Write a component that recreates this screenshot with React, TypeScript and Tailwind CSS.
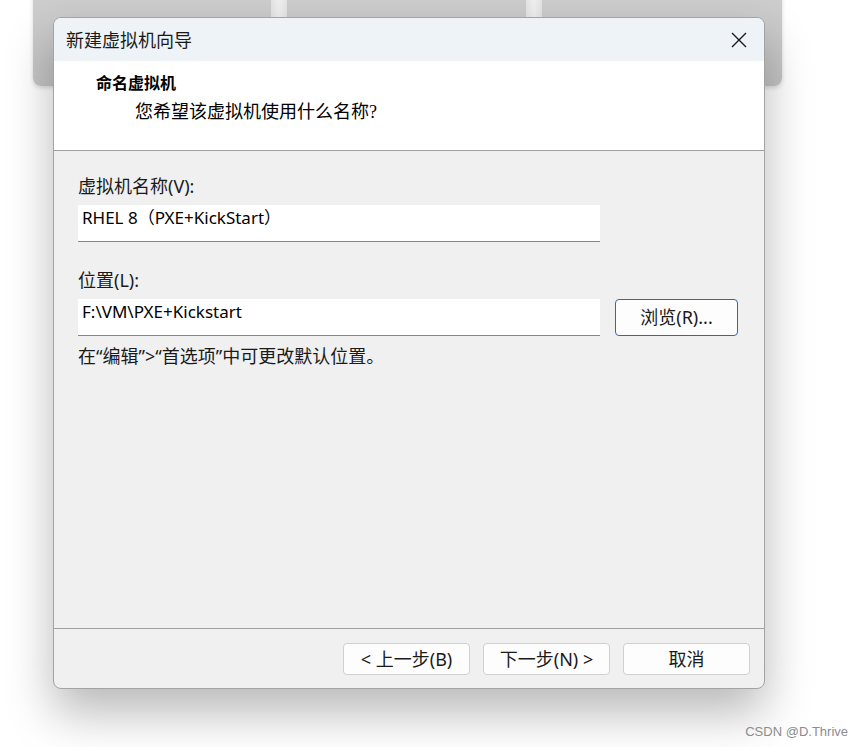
import React from "react";

const cjk = { fontFamily: '"Noto Sans", "Noto Sans CJK SC", sans-serif' };
const serif = { fontFamily: '"Liberation Serif", "Noto Sans CJK SC", serif' };

export default function App() {
  return (
    <div className="relative w-[863px] h-[747px] overflow-hidden bg-white" style={cjk}>
      {/* background window */}
      <div className="absolute left-[33px] top-[-20px] w-[749px] h-[106px] rounded-b-[8px] bg-gradient-to-b from-[#cfcfcf] to-[#c4c4c4] shadow-[0_2px_4px_rgba(0,0,0,0.15)]">
        <div className="absolute left-[238px] top-0 w-[16px] h-full bg-gradient-to-r from-[#e4e4e4] via-[#f0f0f0] to-[#e4e4e4]" />
        <div className="absolute left-[493px] top-0 w-[16px] h-full bg-gradient-to-r from-[#e4e4e4] via-[#f0f0f0] to-[#e4e4e4]" />
      </div>

      {/* dialog */}
      <div className="absolute left-[53px] top-[17px] w-[712px] h-[672px] rounded-[8px] border border-[#a3a3a3] bg-[#f0f0f0] overflow-hidden flex flex-col shadow-[0_24px_48px_rgba(0,0,0,0.28)]">
        {/* title bar */}
        <div className="h-[43px] bg-[#eef3f8] flex items-center justify-between pl-[12px] pr-[16px] shrink-0">
          <span className="text-[18px] text-[#1a1a1a] leading-none">新建虚拟机向导</span>
          <svg width="16" height="16" viewBox="0 0 16 16" className="mr-[1px]">
            <path d="M1 1 L15 15 M15 1 L1 15" stroke="#1a1a1a" strokeWidth="1.4" fill="none" />
          </svg>
        </div>
        {/* header */}
        <div className="h-[90px] bg-white border-b border-[#a0a0a0] shrink-0 flex flex-col pt-[12px]">
          <div className="pl-[42px] text-[16px] font-bold text-black leading-[22px]" style={serif}>命名虚拟机</div>
          <div className="pl-[81px] mt-[6px] text-[18px] text-black leading-[22px]" style={serif}>
            您希望该虚拟机使用什么名称?
          </div>
        </div>
        {/* body */}
        <div className="flex-1 flex flex-col pl-[24px] pt-[22px] text-[#1a1a1a]">
          <div className="text-[18px] leading-[26px]">虚拟机名称(V):</div>
          <div className="mt-[6px] w-[522px] h-[37px] bg-white border-b border-[#868686] pl-[4px] pt-[1px] text-[17px] leading-[24px] text-black">
            RHEL 8（PXE+KickStart）
          </div>
          <div className="mt-[25px] text-[18px] leading-[26px]">位置(L):</div>
          <div className="mt-[6px] flex items-start gap-[15px]">
            <div className="w-[522px] h-[37px] bg-white border-b border-[#868686] pl-[4px] pt-[1px] text-[17px] leading-[24px] text-black">
              F:\VM\PXE+Kickstart
            </div>
            <button className="w-[123px] h-[37px] rounded-[4px] border border-[#1f6fb8] bg-[#fdfdfd] text-[18px] text-[#1a1a1a] flex items-center justify-center">
              浏览(R)...
            </button>
          </div>
          <div className="mt-[7px] text-[18px] leading-[26px]">在“编辑”&gt;“首选项”中可更改默认位置。</div>
        </div>
        {/* footer */}
        <div className="h-[60px] border-t border-[#a0a0a0] shrink-0 flex justify-end items-start pt-[14px] pr-[14px] gap-[13px]">
          {["< 上一步(B)", "下一步(N) >", "取消"].map((t) => (
            <button
              key={t}
              className="w-[127px] h-[32px] rounded-[4px] border border-[#d0d0d0] bg-[#fdfdfd] text-[18px] text-[#1a1a1a] flex items-center justify-center"
            >
              {t}
            </button>
          ))}
        </div>
      </div>

      {/* watermark */}
      <div
        className="absolute right-[15px] top-[723px] text-[13px] text-[#8c8c8c] leading-[18px]"
        style={{ fontFamily: '"Liberation Sans", sans-serif' }}
      >
        CSDN @D.Thrive
      </div>
    </div>
  );
}
